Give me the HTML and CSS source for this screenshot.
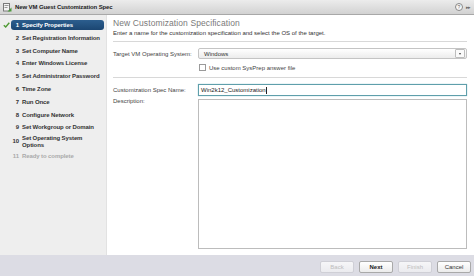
FILE: index.html
```html
<!DOCTYPE html>
<html lang="en">
<head>
    <meta charset="UTF-8">
    <title>New VM Guest Customization Spec</title>
    <link rel="stylesheet" href="styles.css">
</head>
<body>
    <div class="window">
        <!-- Title bar -->
        <div class="titlebar">
            <svg class="app-icon" width="9" height="9" viewBox="0 0 9 9">
                <rect x="0.5" y="0.5" width="6" height="7.5" fill="#f4f4f4" stroke="#7a7a7a"/>
                <rect x="1.5" y="2" width="4" height="1" fill="#9a9a9a"/>
                <rect x="1.5" y="4" width="3" height="1" fill="#9a9a9a"/>
                <path d="M4.5 8.5 L8.5 4.5 L8.5 8.5 Z" fill="#4d9a3c"/>
            </svg>
            <span class="title">New VM Guest Customization Spec</span>
            <span class="title-tools">
                <span class="help">?</span>
                <span class="expand">&#9656;&#9656;</span>
            </span>
        </div>

        <div class="content">
            <!-- Steps -->
            <ul class="steps">
                <li class="step active">
                    <svg class="check" width="7" height="6" viewBox="0 0 7 6"><path d="M0.8 3.2 L2.7 5 L6.3 0.8" fill="none" stroke="#4f9a34" stroke-width="1.4"/></svg>
                    <span class="num">1</span><span>Specify Properties</span>
                </li>
                <li class="step"><span class="num">2</span><span>Set Registration Information</span></li>
                <li class="step"><span class="num">3</span><span>Set Computer Name</span></li>
                <li class="step"><span class="num">4</span><span>Enter Windows License</span></li>
                <li class="step"><span class="num">5</span><span>Set Administrator Password</span></li>
                <li class="step"><span class="num">6</span><span>Time Zone</span></li>
                <li class="step"><span class="num">7</span><span>Run Once</span></li>
                <li class="step"><span class="num">8</span><span>Configure Network</span></li>
                <li class="step"><span class="num">9</span><span>Set Workgroup or Domain</span></li>
                <li class="step two-line"><span class="num">10</span><span>Set Operating System<br>Options</span></li>
                <li class="step disabled"><span class="num">11</span><span>Ready to complete</span></li>
            </ul>

            <!-- Page -->
            <div class="page">
                <h1 class="page-title">New Customization Specification</h1>
                <p class="page-sub">Enter a name for the customization specification and select the OS of the target.</p>
                <div class="sep"></div>

                <div class="row">
                    <label class="label">Target VM Operating System:</label>
                    <div class="select">
                        <span>Windows</span>
                        <span class="select-btn"><span class="arrow"></span></span>
                    </div>
                </div>
                <div class="row check-row">
                    <span class="checkbox"></span>
                    <span>Use custom SysPrep answer file</span>
                </div>
                <div class="sep sep2"></div>

                <div class="row">
                    <label class="label">Customization Spec Name:</label>
                    <div class="input">Win2k12_Customization<span class="caret"></span></div>
                </div>
                <div class="row desc-row">
                    <label class="label desc-label">Description:</label>
                    <div class="textarea"></div>
                </div>
            </div>
        </div>

        <!-- Footer -->
        <div class="footer">
            <button class="btn" disabled>Back</button>
            <button class="btn primary">Next</button>
            <button class="btn" disabled>Finish</button>
            <button class="btn">Cancel</button>
        </div>
    </div>
</body>
</html>
```

FILE: styles.css
```css
body {
    margin: 0;
    font-family: 'Liberation Sans', Arial, sans-serif;
    font-size: 6px;
    color: #333;
    background: #fff;
}
.window {
    width: 474px;
    height: 276px;
    display: flex;
    flex-direction: column;
    overflow: hidden;
}
.titlebar {
    height: 14px;
    flex: none;
    display: flex;
    align-items: center;
    padding: 0 3px;
    background: linear-gradient(#ececec, #d2d2d2);
    border-bottom: 1px solid #a8a8a8;
}
.app-icon {
    margin-right: 3px;
}
.title {
    font-weight: bold;
    color: #222;
    letter-spacing: -0.1px;
}
.title-tools {
    margin-left: auto;
    display: flex;
    align-items: center;
    gap: 3px;
    color: #666;
}
.help {
    width: 6px;
    height: 6px;
    border: 1px solid #888;
    border-radius: 50%;
    font-size: 5px;
    line-height: 6px;
    text-align: center;
    background: #f8f8f8;
}
.expand {
    font-size: 5px;
    letter-spacing: -1px;
    margin-right: 1px;
}
.content {
    flex: 1;
    display: flex;
    min-height: 0;
}
.steps {
    width: 107px;
    flex: none;
    margin: 0;
    padding: 5px 0 0;
    list-style: none;
    background: #eeeeee;
    border-right: 1px solid #e2e2e2;
    box-sizing: border-box;
}
.step {
    position: relative;
    display: flex;
    align-items: center;
    height: 10px;
    margin: 0 2px 2.8px 11px;
    font-weight: bold;
    color: #333;
    letter-spacing: -0.1px;
}
.step .num {
    width: 8px;
    text-align: right;
    margin-right: 3px;
    flex: none;
}
.step.active {
    background: linear-gradient(#2c5e8e, #1b4672);
    color: #fff;
    border-radius: 3px;
}
.check {
    position: absolute;
    left: -8px;
    top: 2px;
}
.step.two-line {
    height: 13px;
    line-height: 6.5px;
}
.step.disabled {
    color: #aaa;
}
.page {
    flex: 1;
    padding: 0 7px 0 6px;
    display: flex;
    flex-direction: column;
}
.page-title {
    margin: 3px 0 0;
    font-size: 8.5px;
    font-weight: normal;
    line-height: 10px;
    color: #7a7a7a;
    letter-spacing: 0.1px;
}
.page-sub {
    margin: 2px 0 0;
    line-height: 7px;
    color: #333;
}
.sep {
    margin-top: 4px;
    border-top: 1px solid #d8d8d8;
}
.sep2 {
    margin-top: 6px;
}
.row {
    display: flex;
    align-items: center;
    margin-top: 6px;
}
.label {
    width: 85px;
    flex: none;
    color: #444;
}
.select {
    flex: 1;
    height: 11px;
    box-sizing: border-box;
    border: 1px solid #c4c4c4;
    border-radius: 2px;
    background: linear-gradient(#fff, #ececec);
    display: flex;
    align-items: center;
    padding-left: 5px;
    color: #333;
}
.select-btn {
    margin-left: auto;
    margin-right: 1px;
    width: 8px;
    height: 7px;
    border: 1px solid #bdbdbd;
    border-radius: 1px;
    background: #fafafa;
    display: flex;
    align-items: center;
    justify-content: center;
}
.arrow {
    border-left: 1.5px solid transparent;
    border-right: 1.5px solid transparent;
    border-top: 2px solid #444;
}
.check-row {
    margin-top: 5px;
    padding-left: 86px;
    height: 7px;
    color: #444;
}
.checkbox {
    width: 5px;
    height: 5px;
    border: 1px solid #9a9a9a;
    background: #fff;
    margin-right: 3px;
}
.input {
    flex: 1;
    height: 12px;
    box-sizing: border-box;
    border: 1px solid #5f9fab;
    box-shadow: 0 0 1px #8cc4cc;
    display: flex;
    align-items: center;
    padding-left: 2px;
    color: #222;
}
.caret {
    width: 1px;
    height: 7px;
    background: #222;
}
.desc-row {
    margin-top: 3px;
    align-items: flex-start;
}
.desc-label {
    margin-top: -1px;
}
.textarea {
    flex: 1;
    height: 150px;
    box-sizing: border-box;
    border: 1px solid #bcbcbc;
    background: #fff;
}
.footer {
    height: 21px;
    flex: none;
    box-sizing: border-box;
    background: #dcdce4;
    display: flex;
    justify-content: flex-end;
    align-items: flex-start;
    gap: 5px;
    padding: 6px 3px 0 0;
}
.btn {
    width: 34px;
    height: 12px;
    padding: 0;
    font-family: inherit;
    font-size: 6px;
    color: #333;
    background: linear-gradient(#ffffff, #ececec);
    border: 1px solid #a9a9a9;
    border-radius: 2px;
}
.btn.primary {
    font-weight: bold;
    color: #222;
}
.btn:disabled {
    color: #bdbdbd;
    border-color: #cfcfd6;
    background: linear-gradient(#f6f6f8, #ebebef);
}
```
